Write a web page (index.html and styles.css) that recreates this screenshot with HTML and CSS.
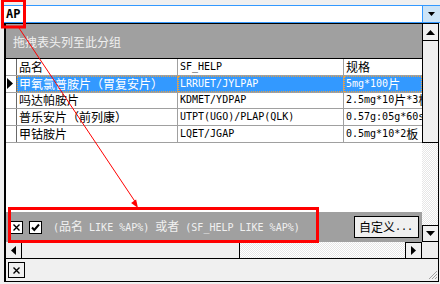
FILE: index.html
```html
<!DOCTYPE html>
<html>
<head>
<meta charset="utf-8">
<link rel="stylesheet" href="styles.css">
</head>
<body>
<div class="combo">
  <div class="combo-text">AP</div>
  <div class="combo-btn"><svg width="7" height="4" viewBox="0 0 7 4"><polygon points="0,0 7,0 3.5,4" fill="#000"/></svg></div>
</div>
<div class="frame">
  <div class="grid-area">
    <div class="content">
      <div class="group-bar">拖拽表头列至此分组</div>
      <div class="row head">
        <div class="cell ind"></div>
        <div class="cell c1 cj">品名</div>
        <div class="cell c2">SF_HELP</div>
        <div class="cell c3 cj">规格</div>
      </div>
      <div class="row sel">
        <div class="cell ind"><svg width="6" height="11" viewBox="0 0 6 11"><polygon points="0,0 6,5.5 0,11" fill="#000"/></svg></div>
        <div class="cell c1 cj">甲氧氯普胺片（胃复安片）</div>
        <div class="cell c2">LRRUET/JYLPAP</div>
        <div class="cell c3">5mg*100<span class="cj">片</span></div>
      </div>
      <div class="row">
        <div class="cell ind"></div>
        <div class="cell c1 cj">吗达帕胺片</div>
        <div class="cell c2">KDMET/YDPAP</div>
        <div class="cell c3">2.5mg*10<span class="cj">片</span>*3<span class="cj">板</span></div>
      </div>
      <div class="row">
        <div class="cell ind"></div>
        <div class="cell c1 cj">普乐安片（前列康）</div>
        <div class="cell c2">UTPT(UGO)/PLAP(QLK)</div>
        <div class="cell c3">0.57g:05g*60s<span class="cj">粒</span></div>
      </div>
      <div class="row">
        <div class="cell ind"></div>
        <div class="cell c1 cj">甲钴胺片</div>
        <div class="cell c2">LQET/JGAP</div>
        <div class="cell c3">0.5mg*10*2<span class="cj">板</span></div>
      </div>
      <div class="blank"></div>
      <div class="filter-bar">
        <div class="box xbox"><svg width="11" height="11" viewBox="0 0 11 11"><path d="M2.5 2.5 L8.5 8.5 M8.5 2.5 L2.5 8.5" stroke="#000" stroke-width="1.4"/></svg></div>
        <div class="box chk"><svg width="11" height="11" viewBox="0 0 11 11"><polyline points="2,5.5 4.3,8 9,2.5" fill="none" stroke="#000" stroke-width="2"/></svg></div>
        <div class="filter-text">(<span class="cj">品名</span> LIKE %AP%) <span class="cj">或者</span> (SF_HELP LIKE %AP%)</div>
        <div class="custom-btn"><span class="cj">自定义</span>...</div>
      </div>
    </div>
    <div class="vscroll">
      <div class="sbtn up"><svg width="9" height="5" viewBox="0 0 9 5"><polygon points="0,5 9,5 4.5,0" fill="#000"/></svg></div>
      <div class="vthumb"></div>
      <div class="track"></div>
      <div class="sbtn down"><svg width="9" height="5" viewBox="0 0 9 5"><polygon points="0,0 9,0 4.5,5" fill="#000"/></svg></div>
    </div>
    <div class="hscroll">
      <div class="hbtn left"><svg width="5" height="9" viewBox="0 0 5 9"><polygon points="5,0 5,9 0,4.5" fill="#000"/></svg></div>
      <div class="hthumb"></div>
      <div class="track"></div>
      <div class="hbtn right"><svg width="5" height="9" viewBox="0 0 5 9"><polygon points="0,0 0,9 5,4.5" fill="#000"/></svg></div>
    </div>
    <div class="corner"></div>
  </div>
  <div class="bottom-panel">
    <div class="close-btn"><svg width="11" height="11" viewBox="0 0 11 11"><path d="M2.5 2.5 L8.5 8.5 M8.5 2.5 L2.5 8.5" stroke="#000" stroke-width="1.4"/></svg></div>
    <svg class="grip" width="11" height="11" viewBox="0 0 11 11"><path d="M10 2 L2 10 M10 5 L5 10 M10 8 L8 10" stroke="#a0a0a0" stroke-width="1"/></svg>
  </div>
</div>
<svg class="annot" width="440" height="284" viewBox="0 0 440 284">
  <rect x="2.5" y="0.5" width="22" height="26.5" fill="none" stroke="#ff0000" stroke-width="3"/>
  <line x1="19" y1="28" x2="136" y2="203" stroke="#ff0000" stroke-width="1"/>
  <polygon points="138,208 131.1,202.9 136.1,199.6" fill="#ff0000"/>
  <rect x="9.5" y="208.5" width="308" height="33" fill="none" stroke="#ff0000" stroke-width="3"/>
</svg>
</body>
</html>
```
FILE: styles.css
```css
* { box-sizing: border-box; }
html, body { margin: 0; padding: 0; }
body {
  width: 440px;
  height: 284px;
  overflow: hidden;
  position: relative;
  background: #f0f0f0;
  color: #000;
  font-family: "DejaVu Sans Mono", "Noto Sans CJK SC", monospace;
  font-size: 10px;
}
.cj { font-family: "Noto Sans CJK SC", sans-serif; font-size: 12px; }

.combo {
  margin: 5px 0 0 2px;
  height: 18px;
  border: 1px solid #3399ff;
  border-right: none;
  background: #fff;
  display: flex;
}
.combo-text {
  flex: 1;
  padding-left: 3px;
  font-family: "DejaVu Sans Mono", monospace;
  font-weight: bold;
  font-size: 12px;
  line-height: 16px;
}
.combo-btn {
  width: 18px;
  background: #cce4f7;
  border-left: 1px solid #3399ff;
  display: flex;
  align-items: center;
  justify-content: center;
}

.frame {
  margin-left: 4px;
  width: 435px;
  height: 259px;
  border: 1px solid #000;
  border-left-width: 2px;
  display: flex;
  flex-direction: column;
}
.grid-area {
  display: grid;
  grid-template-columns: 416px 16px;
  grid-template-rows: 218px 16px;
}
.content {
  display: flex;
  flex-direction: column;
  background: #fff;
  overflow: hidden;
}
.group-bar {
  height: 34px;
  flex: none;
  background: #a0a0a0;
  color: #f0f0f0;
  display: flex;
  align-items: center;
  padding-left: 7px;
  font-family: "Noto Sans CJK SC", sans-serif;
  font-size: 12px;
}
.row {
  display: flex;
  flex: none;
  height: 16.67px;
  border-bottom: 1px solid #a0a0a0;
}
.row.head { height: 18px; border-top: 1px solid #000; }
.cell {
  border-right: 1px solid #a0a0a0;
  display: flex;
  align-items: center;
  padding-left: 2px;
  white-space: nowrap;
  overflow: hidden;
  line-height: 14px;
}
.ind { width: 11px; padding-left: 1px; border-right-color: #696969; }
.c1 { width: 161px; }
.c2 { width: 166px; }
.c3 { flex: 1; border-right: none; }
.sel .c1, .sel .c2, .sel .c3 {
  background: #3399ff;
  color: #fff;
  outline: 1px dotted #e8a040;
  outline-offset: -1px;
}
.blank { flex: 1; }

.filter-bar {
  height: 30px;
  flex: none;
  background: #a0a0a0;
  color: #f0f0f0;
  display: flex;
  align-items: center;
}
.box {
  width: 13px;
  height: 13px;
  border: 1px solid #000;
  background: #fff;
  display: flex;
  align-items: center;
  justify-content: center;
}
.xbox { margin-left: 4px; }
.chk { margin-left: 6px; }
.filter-text { margin-left: 11px; white-space: nowrap; line-height: 14px; }
.custom-btn {
  margin-left: auto;
  margin-right: 3px;
  width: 65px;
  height: 22px;
  border: 1px solid #000;
  background: #f0f0f0;
  color: #000;
  display: flex;
  align-items: center;
  padding-left: 4px;
  white-space: nowrap;
  line-height: 14px;
}

.track {
  background: repeating-conic-gradient(#ffffff 0 25%, #e6e6e6 0 50%) 0 0 / 2px 2px;
}
.vscroll {
  display: flex;
  flex-direction: column;
}
.sbtn {
  height: 17px;
  flex: none;
  background: #f0f0f0;
  border-left: 1px solid #000;
  display: flex;
  align-items: center;
  justify-content: center;
}
.up { border-bottom: 1px solid #000; }
.down { border-top: 1px solid #000; border-bottom: 1px solid #000; }
.vthumb {
  height: 102px;
  flex: none;
  background: #f0f0f0;
  border-left: 1px solid #000;
  border-bottom: 1px solid #000;
}
.vscroll .track { flex: 1; }

.hscroll { display: flex; }
.hbtn {
  width: 16px;
  flex: none;
  background: #f0f0f0;
  display: flex;
  align-items: center;
  justify-content: center;
}
.left { border-right: 1px solid #000; }
.right { width: 17px; border-left: 1px solid #000; border-right: 1px solid #000; border-top: 1px solid #000; }
.hthumb { width: 218px; flex: none; background: #f0f0f0; border-right: 1px solid #000; }
.hscroll .track { flex: 1; }
.corner { background: #f0f0f0; }

.bottom-panel {
  flex: 1;
  border-top: 1px solid #000;
  background: #f0f0f0;
  display: flex;
  justify-content: space-between;
  align-items: flex-start;
  padding: 3px 0 0 2px;
}
.close-btn {
  width: 17px;
  height: 16px;
  border: 1px solid #000;
  background: #f0f0f0;
  display: flex;
  align-items: center;
  justify-content: center;
}
.grip { align-self: flex-end; margin-bottom: 1px; }

.annot {
  position: absolute;
  left: 0;
  top: 0;
  pointer-events: none;
}
```
